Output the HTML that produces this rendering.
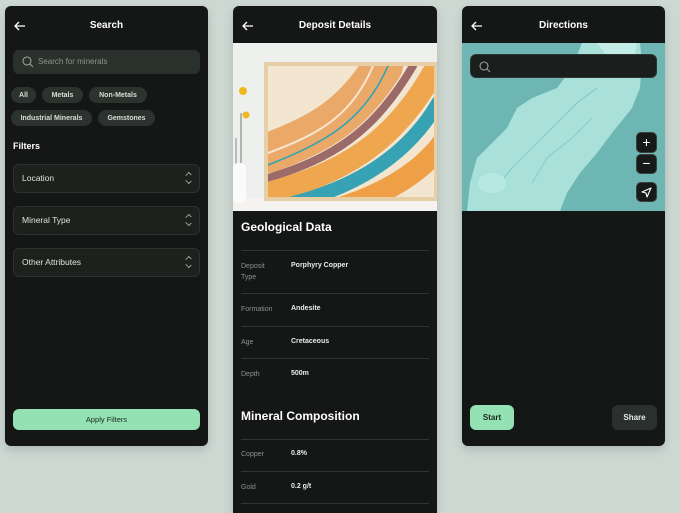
<!DOCTYPE html>
<html><head><meta charset="utf-8"><style>
*{box-sizing:border-box;margin:0;padding:0}
html,body{width:680px;height:513px;overflow:hidden}
body{background:#cdd8d3;font-family:"Liberation Sans",sans-serif;position:relative;color:#e8ece9}
.p{position:absolute;background:#141715;border-radius:6px;overflow:hidden;box-shadow:0 4px 10px rgba(0,0,0,.15)}
.hd{position:absolute;left:0;right:0;top:0;height:36px;font-weight:bold;font-size:10px;text-align:center;line-height:40px;color:#fff}
.bk{position:absolute;left:9px;top:15px}
.ab{position:absolute}
.chip{position:absolute;height:16px;border-radius:8px;background:#2c332f;font-size:7px;font-weight:bold;line-height:17px;text-align:center;color:#d8ddd9;display:flex;align-items:center;justify-content:center}
.sel{position:absolute;left:8px;width:187px;height:29px;border-radius:6px;background:#1c211e;border:1px solid #2c322f;font-size:8.5px;line-height:27px;padding-left:8px;color:#dfe4e0}
.sel:after{content:"";position:absolute;right:8px;top:8px;width:4px;height:3px;border:1px solid #9aa39e;border-width:1px 1px 0 0;transform:rotate(-45deg)}
.sel:before{content:"";position:absolute;right:8px;top:14px;width:4px;height:3px;border:1px solid #9aa39e;border-width:0 1px 1px 0;transform:rotate(45deg)}
.ln{position:absolute;left:8px;width:188px;height:1px;background:#303532}
.lb{position:absolute;left:8px;font-size:7px;color:#8b928e;line-height:11px}
.vl{position:absolute;left:58px;font-size:7px;font-weight:bold;color:#e8ece9}
.h2{position:absolute;left:8px;font-size:12px;font-weight:bold;color:#fff}
.zb{position:absolute;left:174px;width:21px;background:#161a18;border:1px solid #3a403c;border-radius:5px;color:#fff;text-align:center;font-size:14px}
</style></head><body>

<div class="p" style="left:5px;top:6px;width:203px;height:440px">
 <div class="hd">Search</div>
 <svg class="bk" width="12" height="10" viewBox="0 0 12 10"><path d="M11 5H1M5 1L1 5l4 4" stroke="#fff" stroke-width="1.3" fill="none"/></svg>
 <div class="ab" style="left:8px;top:44px;width:187px;height:24px;border-radius:6px;background:#2a312d;font-size:8px;color:#8d9590;line-height:24px;padding-left:25px">Search for minerals
  <svg style="position:absolute;left:9px;top:6px" width="12" height="12" viewBox="0 0 12 12"><circle cx="5" cy="5" r="4" stroke="#9aa39e" stroke-width="1.1" fill="none"/><path d="M8 8l3 3" stroke="#9aa39e" stroke-width="1.1"/></svg></div>
 <div class="chip" style="left:6px;top:81px;width:25px">All</div>
 <div class="chip" style="left:37px;top:81px;width:41px">Metals</div>
 <div class="chip" style="left:84px;top:81px;width:58px">Non-Metals</div>
 <div class="chip" style="left:6px;top:104px;width:81px">Industrial Minerals</div>
 <div class="chip" style="left:93px;top:104px;width:57px">Gemstones</div>
 <div class="ab" style="left:8px;top:135px;font-size:9px;font-weight:bold;color:#fff">Filters</div>
 <div class="sel" style="top:158px">Location</div>
 <div class="sel" style="top:200px">Mineral Type</div>
 <div class="sel" style="top:242px">Other Attributes</div>
 <div class="ab" style="left:8px;top:403px;width:187px;height:21px;border-radius:6px;background:#94e1b4;color:#1a2a20;font-size:7.5px;text-align:center;line-height:21px">Apply Filters</div>
</div>

<div class="p" style="left:233px;top:6px;width:204px;height:507px;border-radius:6px 6px 0 0">
 <div class="hd">Deposit Details</div>
 <svg class="bk" width="12" height="10" viewBox="0 0 12 10"><path d="M11 5H1M5 1L1 5l4 4" stroke="#fff" stroke-width="1.3" fill="none"/></svg>
 <svg class="ab" style="left:0;top:37px" width="204" height="168" viewBox="0 0 204 168">
  <rect width="204" height="168" fill="#eef0ee"/>
  <rect x="0" y="155" width="204" height="13" fill="#f4f3ef"/>
  <rect x="31" y="19" width="174" height="139" fill="#e6cfa6"/>
  <rect x="35" y="23" width="166" height="131" fill="#f2e6d1"/>
  <clipPath id="c"><rect x="35" y="23" width="166" height="131"/></clipPath>
  <g clip-path="url(#c)" fill="none" stroke-linecap="round">
   <path d="M35 110 C90 90 120 70 150 23" stroke="#eaa968" stroke-width="40"/>
   <path d="M35 135 C100 115 140 90 180 23" stroke="#9c6a68" stroke-width="8"/>
   <path d="M35 150 C110 130 160 100 200 30" stroke="#eea64f" stroke-width="22"/>
   <path d="M40 165 C110 150 170 120 205 60" stroke="#36a2b4" stroke-width="14"/>
   <path d="M35 180 C120 170 180 140 210 100" stroke="#ef9f45" stroke-width="22"/>
   <path d="M140 23 C120 70 90 90 35 110" stroke="#ffffff" stroke-width="2" opacity=".7"/>
   <path d="M155 23 C130 80 90 100 35 122" stroke="#2aa3b6" stroke-width="1.5"/>
  </g>
  <path d="M3 150V95" stroke="#888" stroke-width="1"/><path d="M8 150V70" stroke="#777" stroke-width="1"/>
  <circle cx="10" cy="48" r="4" fill="#f0b820"/><circle cx="13" cy="72" r="3.5" fill="#f0b820"/>
  <rect x="0" y="120" width="13" height="40" rx="5" fill="#fafafa"/>
 </svg>
 <div class="h2" style="top:214px">Geological Data</div>
 <div class="ln" style="top:244px"></div>
 <div class="lb" style="top:255px">Deposit<br>Type</div><div class="vl" style="top:256px">Porphyry Copper</div>
 <div class="ln" style="top:287px"></div>
 <div class="lb" style="top:298px">Formation</div><div class="vl" style="top:299px">Andesite</div>
 <div class="ln" style="top:320px"></div>
 <div class="lb" style="top:331px">Age</div><div class="vl" style="top:332px">Cretaceous</div>
 <div class="ln" style="top:352px"></div>
 <div class="lb" style="top:363px">Depth</div><div class="vl" style="top:364px">500m</div>
 <div class="h2" style="top:403px">Mineral Composition</div>
 <div class="ln" style="top:433px"></div>
 <div class="lb" style="top:443px">Copper</div><div class="vl" style="top:444px">0.8%</div>
 <div class="ln" style="top:465px"></div>
 <div class="lb" style="top:476px">Gold</div><div class="vl" style="top:477px">0.2 g/t</div>
 <div class="ln" style="top:497px"></div>
</div>

<div class="p" style="left:462px;top:6px;width:203px;height:440px">
 <div class="hd">Directions</div>
 <svg class="bk" width="12" height="10" viewBox="0 0 12 10"><path d="M11 5H1M5 1L1 5l4 4" stroke="#fff" stroke-width="1.3" fill="none"/></svg>
 <svg class="ab" style="left:0;top:37px" width="203" height="168" viewBox="0 0 203 168">
  <rect width="203" height="168" fill="#6db6b3"/>
  <path d="M120 0 L178 0 L180 20 L178 45 L170 65 L150 90 L135 110 L118 130 L105 150 L98 168 L5 168 L8 140 L15 115 L30 100 L45 85 L55 65 L70 55 L95 45 L110 25Z" fill="#a9e0da"/>
  <path d="M30 150 L50 125 L75 100 L95 80 L115 60 L135 45" stroke="#88cbc6" stroke-width="1.2" fill="none"/>
  <path d="M70 140 L85 115 L110 95 L130 75" stroke="#88cbc6" stroke-width="1" fill="none"/>
  <path d="M135 0 L175 0 L172 15 L150 20Z" fill="#c4ece6"/>
  <ellipse cx="30" cy="140" rx="14" ry="10" fill="#b8e8e2"/>
 </svg>
 <div class="ab" style="left:8px;top:48px;width:187px;height:24px;border-radius:6px;background:#1a1e1c;border:1px solid #2e3431">
  <svg style="position:absolute;left:8px;top:6px" width="12" height="12" viewBox="0 0 12 12"><circle cx="5" cy="5" r="4" stroke="#9aa39e" stroke-width="1.1" fill="none"/><path d="M8 8l3 3" stroke="#9aa39e" stroke-width="1.1"/></svg></div>
 <div class="zb" style="top:126px;height:21px;line-height:19px">+</div>
 <div class="zb" style="top:148px;height:20px;line-height:17px">−</div>
 <div class="zb" style="top:176px;height:20px">
  <svg style="position:absolute;left:4px;top:4px" width="11" height="11" viewBox="0 0 11 11"><path d="M10 1L1 5l4 1 1 4z" stroke="#fff" stroke-width="1.1" fill="none" stroke-linejoin="round"/></svg></div>
 <div class="ab" style="left:8px;top:399px;width:44px;height:25px;border-radius:6px;background:#94e1b4;color:#1a2a20;font-size:8px;font-weight:bold;text-align:center;line-height:25px">Start</div>
 <div class="ab" style="left:150px;top:399px;width:45px;height:25px;border-radius:6px;background:#2a302d;color:#e8ece9;font-size:8px;font-weight:bold;text-align:center;line-height:25px">Share</div>
</div>
</body></html>
